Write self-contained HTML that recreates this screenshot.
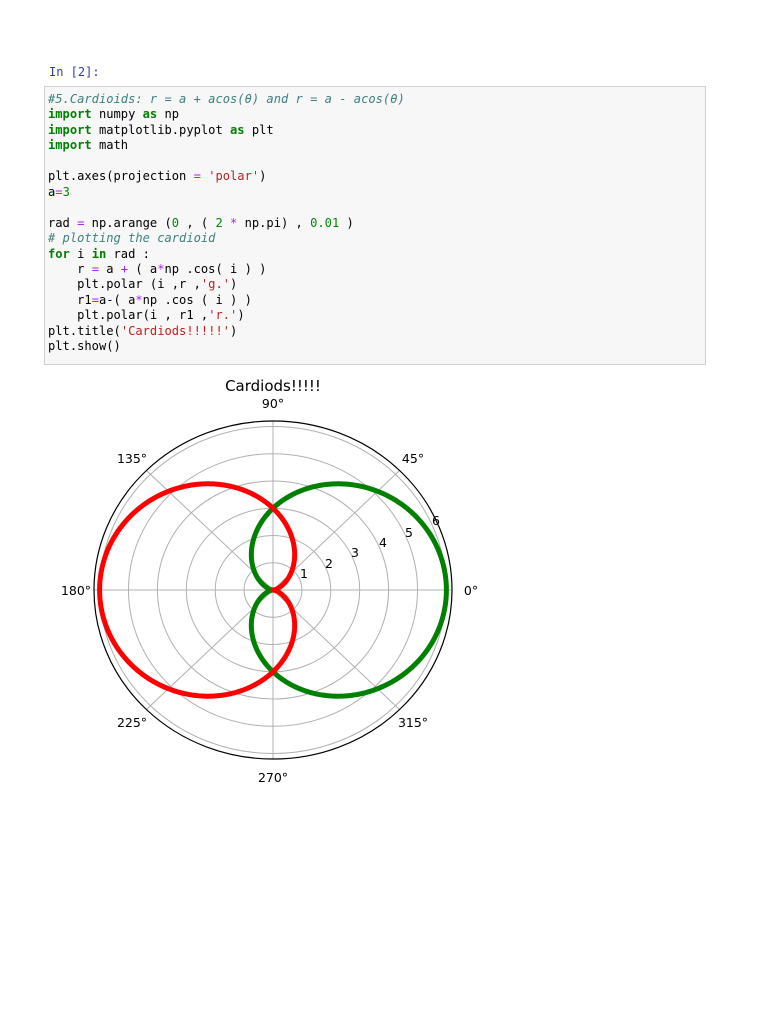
<!DOCTYPE html>
<html><head><meta charset="utf-8"><style>
body{margin:0;background:#fff;width:768px;height:1024px;position:relative;overflow:hidden}
.prompt{position:absolute;left:49px;top:65px;font:12px "DejaVu Sans Mono",monospace;color:#303F9F}
.cell{position:absolute;left:44px;top:86px;width:662px;height:279px;border:1px solid #cfcfcf;background:#f7f7f7;box-sizing:border-box}
pre{margin:0;position:absolute;left:3px;top:5px;font:12.1px/15.45px "DejaVu Sans Mono",monospace;color:#000}
.c{color:#408080;font-style:italic}.k{color:#008000;font-weight:bold}.s{color:#BA2121}.n{color:#080}.o{color:#AA22FF}
svg{position:absolute;left:0;top:0}
</style></head><body>
<div class="prompt">In [2]:</div>
<div class="cell"><pre><span class="c">#5.Cardioids: r = a + acos(θ) and r = a - acos(θ)</span>
<span class="k">import</span> numpy <span class="k">as</span> np
<span class="k">import</span> matplotlib.pyplot <span class="k">as</span> plt
<span class="k">import</span> math

plt.axes(projection <span class="o">=</span> <span class="s">'polar'</span>)
a<span class="o">=</span><span class="n">3</span>

rad <span class="o">=</span> np.arange (<span class="n">0</span> , ( <span class="n">2</span> <span class="o">*</span> np.pi) , <span class="n">0.01</span> )
<span class="c"># plotting the cardioid</span>
<span class="k">for</span> i <span class="k">in</span> rad :
    r <span class="o">=</span> a <span class="o">+</span> ( a<span class="o">*</span>np .cos( i ) )
    plt.polar (i ,r ,<span class="s">'g.'</span>)
    r1<span class="o">=</span>a-( a<span class="o">*</span>np .cos ( i ) )
    plt.polar(i , r1 ,<span class="s">'r.'</span>)
plt.title(<span class="s">'Cardiods!!!!!'</span>)
plt.show()</pre></div>
<svg width="768" height="1024" font-family="DejaVu Sans, Liberation Sans, sans-serif" font-size="12.5">
<g id="grid" stroke="#b0b0b0" stroke-width="1" fill="none"></g>
<ellipse cx="273" cy="590" rx="179" ry="169" fill="none" stroke="#000" stroke-width="1.2"/>
<path id="g" fill="none" stroke="#008000" stroke-width="5" stroke-linejoin="round"/>
<path id="r" fill="none" stroke="#ff0000" stroke-width="5" stroke-linejoin="round"/>
<text x="273" y="391" text-anchor="middle" font-size="15">Cardiods!!!!!</text>
<g text-anchor="middle" fill="#000">
<text x="273" y="408">90°</text>
<text x="413" y="463">45°</text>
<text x="132" y="463">135°</text>
<text x="76" y="595">180°</text>
<text x="471" y="595">0°</text>
<text x="132" y="727">225°</text>
<text x="413" y="727">315°</text>
<text x="273" y="782">270°</text>
<text x="304" y="578">1</text><text x="329" y="568">2</text><text x="355" y="557">3</text>
<text x="383" y="547">4</text><text x="409" y="537">5</text><text x="436" y="525">6</text>
</g>
</svg>
<script>
var cx=273,cy=590,ux=28.9,uy=27.25;
var g=document.getElementById('grid'),h='';
for(var k=1;k<=6;k++)h+='<ellipse cx="'+cx+'" cy="'+cy+'" rx="'+(k*ux)+'" ry="'+(k*uy)+'"/>';
for(var a=0;a<4;a++){var t=a*Math.PI/4;h+='<line x1="'+(cx+179*Math.cos(t))+'" y1="'+(cy-169*Math.sin(t))+'" x2="'+(cx-179*Math.cos(t))+'" y2="'+(cy+169*Math.sin(t))+'"/>';}
g.innerHTML=h;
function p(s){var d='';for(var i=0;i<=630;i++){var t=i*0.01,r=3+s*3*Math.cos(t);d+=(i?'L':'M')+(cx+r*Math.cos(t)*ux).toFixed(2)+','+(cy-r*Math.sin(t)*uy).toFixed(2);}return d;}
document.getElementById('g').setAttribute('d',p(1));
document.getElementById('r').setAttribute('d',p(-1));
</script>
</body></html>
